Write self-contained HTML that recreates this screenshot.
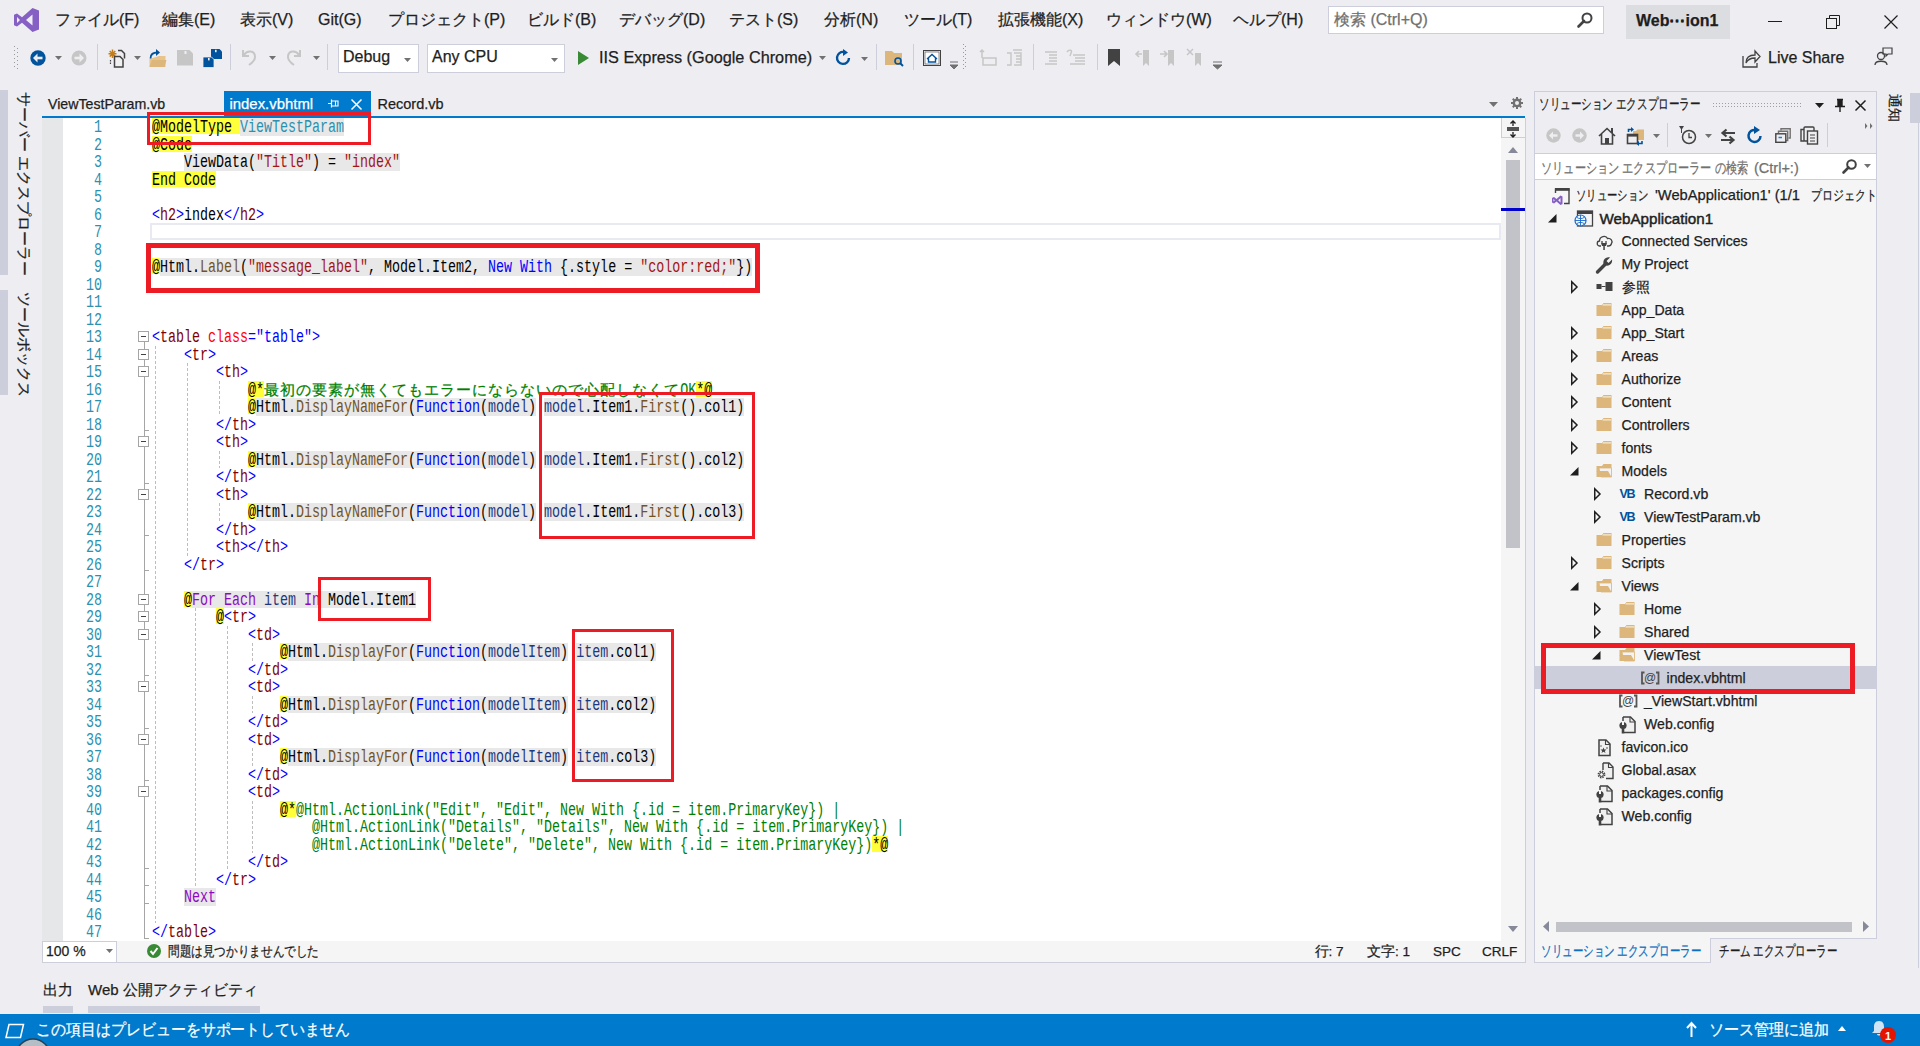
<!DOCTYPE html>
<html><head><meta charset='utf-8'><style>
*{margin:0;padding:0;box-sizing:border-box}
html,body{width:1920px;height:1046px;overflow:hidden;background:#EEEEF2;position:relative;font-family:"Liberation Sans",sans-serif;color:#1E1E1E}
.a{position:absolute}
.t{position:absolute;white-space:pre;line-height:16px;font-size:16px;-webkit-text-stroke:0.25px currentColor}
.sx{display:inline-block;transform-origin:0 0}
svg{position:absolute;overflow:visible}
</style></head><body>
<svg class='a' style='left:14px;top:8px;' width='26' height='24' viewBox='0 0 26 24'><path d='M18.5 0 L25 2.6 V21.4 L18.5 24 L8 14.8 L3 18.6 L0 17.2 V6.8 L3 5.4 L8 9.2 Z M18.5 6.6 L12 12 L18.5 17.4 Z M3 9 V15 L6 12 Z' fill='#865FC5' fill-rule='evenodd'/></svg>
<div class='t' style='left:55px;top:12px;font-size:16px;line-height:16px;color:#1E1E1E;'>ファイル(F)</div>
<div class='t' style='left:162px;top:12px;font-size:16px;line-height:16px;color:#1E1E1E;'>編集(E)</div>
<div class='t' style='left:240px;top:12px;font-size:16px;line-height:16px;color:#1E1E1E;'>表示(V)</div>
<div class='t' style='left:318px;top:12px;font-size:16px;line-height:16px;color:#1E1E1E;'>Git(G)</div>
<div class='t' style='left:388px;top:12px;font-size:16px;line-height:16px;color:#1E1E1E;'>プロジェクト(P)</div>
<div class='t' style='left:527px;top:12px;font-size:16px;line-height:16px;color:#1E1E1E;'>ビルド(B)</div>
<div class='t' style='left:619px;top:12px;font-size:16px;line-height:16px;color:#1E1E1E;'>デバッグ(D)</div>
<div class='t' style='left:729px;top:12px;font-size:16px;line-height:16px;color:#1E1E1E;'>テスト(S)</div>
<div class='t' style='left:824px;top:12px;font-size:16px;line-height:16px;color:#1E1E1E;'>分析(N)</div>
<div class='t' style='left:904px;top:12px;font-size:16px;line-height:16px;color:#1E1E1E;'>ツール(T)</div>
<div class='t' style='left:998px;top:12px;font-size:16px;line-height:16px;color:#1E1E1E;'>拡張機能(X)</div>
<div class='t' style='left:1106px;top:12px;font-size:16px;line-height:16px;color:#1E1E1E;'>ウィンドウ(W)</div>
<div class='t' style='left:1233px;top:12px;font-size:16px;line-height:16px;color:#1E1E1E;'>ヘルプ(H)</div>
<div class='a' style='left:1328px;top:6px;width:276px;height:28px;background:#fff;border:1px solid #CCCEDB'></div>
<div class='t' style='left:1334px;top:12px;font-size:16px;line-height:16px;color:#717171;'>検索 (Ctrl+Q)</div>
<svg class='a' style='left:1577px;top:12px;' width='16' height='16' viewBox='0 0 16 16'><circle cx='10' cy='6' r='4.5' fill='none' stroke='#424242' stroke-width='2'/><path d='M7 9 L1.5 14.5' stroke='#424242' stroke-width='2.6' stroke-linecap='round'/></svg>
<div class='a' style='left:1626px;top:5px;width:104px;height:34px;background:#DCDDE1'></div>
<div class='t' style='left:1636px;top:13px;font-size:16px;line-height:16px;color:#1E1E1E;font-weight:bold'>Web⋯ion1</div>
<div class='a' style='left:1768px;top:21px;width:14px;height:1px;background:#1E1E1E'></div>
<svg class='a' style='left:1826px;top:15px;' width='14' height='14' viewBox='0 0 14 14'><rect x='0.5' y='3.5' width='10' height='10' fill='none' stroke='#1E1E1E'/><path d='M3.5 3.5 V0.5 H13.5 V10.5 H10.5' fill='none' stroke='#1E1E1E'/></svg>
<svg class='a' style='left:1884px;top:15px;' width='14' height='14' viewBox='0 0 14 14'><path d='M0.5 0.5 L13.5 13.5 M13.5 0.5 L0.5 13.5' stroke='#1E1E1E' stroke-width='1.2'/></svg>
<svg class='a' style='left:14px;top:46px;' width='6' height='24' viewBox='0 0 6 24'><rect x='0' y='0' width='1' height='1' fill='#999'/><rect x='3' y='2' width='1' height='1' fill='#999'/><rect x='0' y='4' width='1' height='1' fill='#999'/><rect x='3' y='6' width='1' height='1' fill='#999'/><rect x='0' y='8' width='1' height='1' fill='#999'/><rect x='3' y='10' width='1' height='1' fill='#999'/><rect x='0' y='12' width='1' height='1' fill='#999'/><rect x='3' y='14' width='1' height='1' fill='#999'/><rect x='0' y='16' width='1' height='1' fill='#999'/><rect x='3' y='18' width='1' height='1' fill='#999'/><rect x='0' y='20' width='1' height='1' fill='#999'/><rect x='3' y='22' width='1' height='1' fill='#999'/></svg>
<svg class='a' style='left:30px;top:50px;' width='16' height='16' viewBox='0 0 16 16'><circle cx='8' cy='8' r='7.7' fill='#00539C'/><path d='M12.5 8 H5.5' stroke='#EEEEF2' stroke-width='2.6'/><path d='M3 8 L7.5 3.5 V12.5 Z' fill='#EEEEF2'/></svg>
<svg class='a' style='left:55px;top:56px;' width='7' height='4' viewBox='0 0 7 4'><path d='M0 0 H7 L3.5 4 Z' fill='#717171'/></svg>
<svg class='a' style='left:71px;top:50px;' width='16' height='16' viewBox='0 0 16 16'><circle cx='8' cy='8' r='7.5' fill='#C6C6C6'/><path d='M3.5 8 H10.5' stroke='#EEEEF2' stroke-width='2.6'/><path d='M13 8 L8.5 3.5 V12.5 Z' fill='#EEEEF2'/></svg>
<div class='a' style='left:97px;top:44px;width:1px;height:26px;background:#CCCEDB'></div>
<div class='a' style='left:230px;top:44px;width:1px;height:26px;background:#CCCEDB'></div>
<div class='a' style='left:327px;top:44px;width:1px;height:26px;background:#CCCEDB'></div>
<div class='a' style='left:876px;top:44px;width:1px;height:26px;background:#CCCEDB'></div>
<svg class='a' style='left:107px;top:48px;' width='19' height='20' viewBox='0 0 19 20'><path d='M5.5 1.5 V10 M1.5 5.8 H9.5 M2.7 3 L8.3 8.6 M8.3 3 L2.7 8.6' stroke='#C27D1A' stroke-width='1.5'/><path d='M11 2.5 H14.5 L17.5 5.5 V10.5' fill='none' stroke='#424242' stroke-width='1.5'/><path d='M7.5 8.5 H13 L16 11.5 V19 H7.5 Z' fill='#F0F0F0' stroke='#424242' stroke-width='1.5'/><path d='M3.5 12 V15.5 H5' fill='none' stroke='#424242' stroke-width='1.2' stroke-dasharray='1.5 1'/></svg>
<svg class='a' style='left:134px;top:56px;' width='7' height='4' viewBox='0 0 7 4'><path d='M0 0 H7 L3.5 4 Z' fill='#717171'/></svg>
<svg class='a' style='left:149px;top:49px;' width='18' height='19' viewBox='0 0 18 19'><path d='M10 7 H16.5 V18 H0.5 V10 Z' fill='#E8C48A'/><path d='M0.5 18 L3 11 H17.5 L15.5 18 Z' fill='#DCB67A'/><path d='M1.5 9.5 C1.5 5 4 3.5 8.5 3.5' fill='none' stroke='#00539C' stroke-width='1.8'/><path d='M7 0 L11 3.5 L7 7 Z' fill='#00539C'/></svg>
<svg class='a' style='left:177px;top:50px;' width='16' height='16' viewBox='0 0 16 16'><path d='M0 0 H12.5 L16 3.5 V15.5 H0 Z' fill='#C6C6C6'/><rect x='3' y='0' width='8' height='5.5' fill='#EEEEF2' opacity='0'/><rect x='7.5' y='1' width='2' height='3' fill='#EEEEF2'/></svg>
<svg class='a' style='left:203px;top:49px;' width='19' height='19' viewBox='0 0 19 19'><path d='M8 0 H16.5 L19 2.5 V10 H8 Z' fill='#00539C'/><rect x='12' y='0.8' width='1.6' height='2.4' fill='#EEEEF2'/><path d='M0 8 H8.5 L11 10.5 V18.5 H0 Z' fill='#00539C' stroke='#EEEEF2' stroke-width='0.8'/><rect x='5' y='9' width='1.6' height='2.4' fill='#EEEEF2'/></svg>
<svg class='a' style='left:241px;top:48px;' width='16' height='18' viewBox='0 0 16 18'><path d='M2 2 V8 H8' fill='none' stroke='#C6C6C6' stroke-width='2'/><path d='M3 7 C6 2 14 2 14 9 C14 13 11 15 8 17' fill='none' stroke='#C6C6C6' stroke-width='2'/></svg>
<svg class='a' style='left:269px;top:56px;' width='7' height='4' viewBox='0 0 7 4'><path d='M0 0 H7 L3.5 4 Z' fill='#717171'/></svg>
<svg class='a' style='left:286px;top:48px;' width='16' height='18' viewBox='0 0 16 18'><path d='M14 2 V8 H8' fill='none' stroke='#C6C6C6' stroke-width='2'/><path d='M13 7 C10 2 2 2 2 9 C2 13 5 15 8 17' fill='none' stroke='#C6C6C6' stroke-width='2'/></svg>
<svg class='a' style='left:313px;top:56px;' width='7' height='4' viewBox='0 0 7 4'><path d='M0 0 H7 L3.5 4 Z' fill='#717171'/></svg>
<div class='a' style='left:338px;top:44px;width:81px;height:29px;background:#fff;border:1px solid #CCCEDB'></div>
<div class='t' style='left:343px;top:49px;font-size:16px;line-height:16px;color:#1E1E1E;'>Debug</div>
<svg class='a' style='left:404px;top:58px;' width='7' height='4' viewBox='0 0 7 4'><path d='M0 0 H7 L3.5 4 Z' fill='#717171'/></svg>
<div class='a' style='left:427px;top:44px;width:138px;height:29px;background:#fff;border:1px solid #CCCEDB'></div>
<div class='t' style='left:432px;top:49px;font-size:16px;line-height:16px;color:#1E1E1E;'>Any CPU</div>
<svg class='a' style='left:551px;top:58px;' width='7' height='4' viewBox='0 0 7 4'><path d='M0 0 H7 L3.5 4 Z' fill='#717171'/></svg>
<svg class='a' style='left:578px;top:51px;' width='11' height='14' viewBox='0 0 11 14'><path d='M0 0 L11 7 L0 14 Z' fill='#388A34'/></svg>
<div class='t' style='left:599px;top:49px;font-size:16.25px;line-height:16.25px;color:#1E1E1E;'>IIS Express (Google Chrome)</div>
<svg class='a' style='left:819px;top:56px;' width='7' height='4' viewBox='0 0 7 4'><path d='M0 0 H7 L3.5 4 Z' fill='#717171'/></svg>
<svg class='a' style='left:836px;top:49px;' width='16' height='18' viewBox='0 0 16 18'><path d='M13 9 A6 6 0 1 1 8 3' fill='none' stroke='#00539C' stroke-width='2.4'/><path d='M7 0 L12 3.5 L7 7 Z' fill='#00539C'/></svg>
<svg class='a' style='left:861px;top:57px;' width='7' height='4' viewBox='0 0 7 4'><path d='M0 0 H7 L3.5 4 Z' fill='#717171'/></svg>
<svg class='a' style='left:885px;top:50px;' width='19' height='18' viewBox='0 0 19 18'><path d='M0 1 H7 L9 3 H17 V15 H0 Z' fill='#DCB67A'/><circle cx='13' cy='11' r='3' fill='none' stroke='#00539C' stroke-width='1.6'/><path d='M15 13 L18 16' stroke='#00539C' stroke-width='2'/></svg>
<div class='a' style='left:913px;top:44px;width:1px;height:26px;background:#CCCEDB'></div>
<svg class='a' style='left:923px;top:50px;' width='18' height='16' viewBox='0 0 18 16'><rect x='0.5' y='0.5' width='17' height='15' fill='none' stroke='#424242'/><rect x='2' y='2' width='14' height='12' fill='#fff' stroke='#424242' stroke-width='0.6'/><path d='M4 9 L9 4.5 L14 9 M5.5 8 V12 H12.5 V8' fill='none' stroke='#00539C' stroke-width='1.4'/></svg>
<svg class='a' style='left:950px;top:62px;' width='8' height='8' viewBox='0 0 8 8'><path d='M0 0 H8 M0 3 H8 L4 7 Z' stroke='#717171' fill='#717171' stroke-width='1'/></svg>
<svg class='a' style='left:963px;top:44px;' width='3' height='26' viewBox='0 0 3 26'><rect x='0' y='0' width='1' height='1' fill='#999'/><rect x='2' y='2' width='1' height='1' fill='#999'/><rect x='0' y='4' width='1' height='1' fill='#999'/><rect x='2' y='6' width='1' height='1' fill='#999'/><rect x='0' y='8' width='1' height='1' fill='#999'/><rect x='2' y='10' width='1' height='1' fill='#999'/><rect x='0' y='12' width='1' height='1' fill='#999'/><rect x='2' y='14' width='1' height='1' fill='#999'/><rect x='0' y='16' width='1' height='1' fill='#999'/><rect x='2' y='18' width='1' height='1' fill='#999'/><rect x='0' y='20' width='1' height='1' fill='#999'/><rect x='2' y='22' width='1' height='1' fill='#999'/><rect x='0' y='24' width='1' height='1' fill='#999'/></svg>
<svg class='a' style='left:980px;top:50px;' width='16' height='16' viewBox='0 0 16 16'><path d='M2 0 V8 M0 2 L2 0 L4 2 M3 8 H16 V15 H3 Z' fill='none' stroke='#C6C6C6' stroke-width='1.5'/></svg>
<svg class='a' style='left:1006px;top:49px;' width='16' height='18' viewBox='0 0 16 18'><path d='M1 4 H5 V16 H1 M7 1 H16 M8 4 H15 V16 H8 M10 7 H15 M10 10 H15 M10 13 H15' fill='none' stroke='#C6C6C6' stroke-width='1.4'/></svg>
<div class='a' style='left:1033px;top:44px;width:1px;height:26px;background:#CCCEDB'></div>
<svg class='a' style='left:1044px;top:51px;' width='14' height='14' viewBox='0 0 14 14'><path d='M1 1 H13 M5 4 H13 M5 7 H13 M5 10 H13 M1 13 H13' stroke='#C6C6C6' stroke-width='1.4'/></svg>
<svg class='a' style='left:1067px;top:50px;' width='18' height='16' viewBox='0 0 18 16'><path d='M0 2 C2 -1 6 0 4 3 L3 6 M6 5 H18 M8 8 H18 M8 11 H18 M3 14 H18' fill='none' stroke='#C6C6C6' stroke-width='1.4'/></svg>
<div class='a' style='left:1097px;top:44px;width:1px;height:26px;background:#CCCEDB'></div>
<svg class='a' style='left:1108px;top:49px;' width='12' height='17' viewBox='0 0 12 17'><path d='M0 0 H12 V17 L6 12 L0 17 Z' fill='#424242'/></svg>
<svg class='a' style='left:1135px;top:49px;' width='16' height='17' viewBox='0 0 16 17'><path d='M8 1 H14 V17 L11 14 L8 17 Z' fill='#C6C6C6'/><path d='M7 5 H1 M4 2 L1 5 L4 8' fill='none' stroke='#C6C6C6' stroke-width='1.6'/></svg>
<svg class='a' style='left:1160px;top:49px;' width='16' height='17' viewBox='0 0 16 17'><path d='M8 1 H14 V17 L11 14 L8 17 Z' fill='#C6C6C6'/><path d='M0 5 H7 M4 2 L7 5 L4 8' fill='none' stroke='#C6C6C6' stroke-width='1.6'/></svg>
<svg class='a' style='left:1187px;top:49px;' width='16' height='17' viewBox='0 0 16 17'><path d='M8 4 H14 V17 L11 14 L8 17 Z' fill='#C6C6C6'/><path d='M0 0 L6 6 M6 0 L0 6' fill='none' stroke='#C6C6C6' stroke-width='1.5'/></svg>
<svg class='a' style='left:1213px;top:62px;' width='9' height='8' viewBox='0 0 9 8'><path d='M0 0 H9 M0 3 H9 L4.5 7 Z' stroke='#717171' fill='#717171' stroke-width='1'/></svg>
<svg class='a' style='left:1742px;top:48px;' width='19' height='20' viewBox='0 0 19 20'><path d='M1 8 V19 H15 V15' fill='none' stroke='#424242' stroke-width='1.3'/><path d='M4 15 C4 9 8 7 13 7 V3 L18 8.5 L13 14 V10 C9 10 6 11 4 15 Z' fill='none' stroke='#424242' stroke-width='1.3'/></svg>
<div class='t' style='left:1768px;top:50px;font-size:16px;line-height:16px;color:#1E1E1E;'>Live Share</div>
<svg class='a' style='left:1874px;top:47px;' width='19' height='19' viewBox='0 0 19 19'><circle cx='7' cy='9' r='3.5' fill='none' stroke='#424242' stroke-width='1.3'/><path d='M1 18 C1 13 13 13 13 18' fill='none' stroke='#424242' stroke-width='1.3'/><path d='M9 1 H18 V7 H14 L12 9 V7 H9 Z' fill='none' stroke='#424242' stroke-width='1.2'/></svg>
<div class='a' style='left:0px;top:90px;width:8px;height:185px;background:#CCCEDB'></div>
<div class='a' style='left:0px;top:290px;width:8px;height:105px;background:#CCCEDB'></div>
<div class='t' style='left:16px;top:92px;font-size:15px;line-height:15px;color:#1E1E1E;writing-mode:vertical-rl;text-orientation:sideways;line-height:16px'>サーバー エクスプローラー</div>
<div class='t' style='left:16px;top:292px;font-size:15px;line-height:15px;color:#1E1E1E;writing-mode:vertical-rl;text-orientation:sideways;line-height:16px'>ツールボックス</div>
<div class='a' style='left:1910px;top:93px;width:10px;height:30px;background:#CCCEDB'></div>
<div class='t' style='left:1887px;top:94px;font-size:14px;line-height:14px;color:#1E1E1E;writing-mode:vertical-rl;text-orientation:sideways;line-height:16px'>通知</div>
<div class='a' style='left:1918px;top:93px;width:1px;height:875px;background:#CCCEDB'></div>
<div class='t' style='left:43px;top:982px;font-size:15px;line-height:15px;color:#1E1E1E;'>出力</div>
<div class='t' style='left:88px;top:982px;font-size:15px;line-height:15px;color:#1E1E1E;'>Web 公開アクティビティ</div>
<div class='a' style='left:43px;top:1006px;width:30px;height:7px;background:#CCCEDB'></div>
<div class='a' style='left:88px;top:1006px;width:172px;height:7px;background:#CCCEDB'></div>
<div class='a' style='left:0px;top:1014px;width:1920px;height:32px;background:#007ACC'></div>
<svg class='a' style='left:5px;top:1022.5px;' width='20' height='16' viewBox='0 0 20 16'><path d='M4 1.5 H18.5 L15.5 14.5 H1 Z' fill='none' stroke='#fff' stroke-width='1.5'/></svg>
<div class='t' style='left:36px;top:1022px;font-size:16px;line-height:16px;color:#fff;'><span class='sx' style='transform:scaleX(0.935)'>この項目はプレビューをサポートしていません</span></div>
<svg class='a' style='left:1686px;top:1022px;' width='11' height='15' viewBox='0 0 11 15'><path d='M5.5 15 V2 M1 6 L5.5 1 L10 6' fill='none' stroke='#fff' stroke-width='2'/></svg>
<div class='t' style='left:1709px;top:1022px;font-size:16px;line-height:16px;color:#fff;'><span class='sx' style='transform:scaleX(0.94)'>ソース管理に追加</span></div>
<svg class='a' style='left:1838px;top:1026px;' width='8' height='5' viewBox='0 0 8 5'><path d='M0 5 L4 0 L8 5 Z' fill='#fff'/></svg>
<svg class='a' style='left:1871px;top:1020px;' width='16' height='17' viewBox='0 0 16 17'><path d='M8 1 C4 1 3 4 3 7 V11 L1 13 H15 L13 11 V7 C13 4 12 1 8 1 Z M6 14 C6 16 10 16 10 14' fill='#D0E4F5' /></svg>
<svg class='a' style='left:1880px;top:1027px;' width='16' height='16' viewBox='0 0 16 16'><circle cx='8' cy='8' r='8' fill='#E51400'/><text x='8' y='12.5' font-size='11' font-weight='bold' text-anchor='middle' fill='#fff' font-family='Liberation Sans'>1</text></svg>
<svg class='a' style='left:14px;top:1037px;' width='38' height='10' viewBox='0 0 38 10'><circle cx='19' cy='19' r='17' fill='#B4BEC4' stroke='#2A3F4F' stroke-width='1.5'/></svg>
<div class='t' style='left:48px;top:97.4px;font-size:14.2px;line-height:14.2px;color:#1E1E1E;'>ViewTestParam.vb</div>
<div class='a' style='left:224px;top:91px;width:147px;height:27px;background:#007ACC'></div>
<div class='t' style='left:229.5px;top:97.4px;font-size:14.9px;line-height:14.9px;color:#FFFFFF;'>index.vbhtml</div>
<svg class='a' style='left:328px;top:98px;' width='11' height='11' viewBox='0 0 11 11'><path d='M0 5.5 H3.5 M3.5 1.5 V9.5' fill='none' stroke='#fff' stroke-width='1.2'/><path d='M3.5 3 H10 V8 H3.5 M7.5 3 V8' fill='none' stroke='#fff' stroke-width='1.1'/></svg>
<svg class='a' style='left:351px;top:99px;' width='11' height='11' viewBox='0 0 11 11'><path d='M0.5 0.5 L10.5 10.5 M10.5 0.5 L0.5 10.5' stroke='#fff' stroke-width='1.5'/></svg>
<div class='t' style='left:377.5px;top:97.4px;font-size:14.5px;line-height:14.5px;color:#1E1E1E;'>Record.vb</div>
<svg class='a' style='left:1489px;top:102px;' width='9' height='5' viewBox='0 0 9 5'><path d='M0 0 H9 L4.5 5 Z' fill='#717171'/></svg>
<svg class='a' style='left:1511px;top:97px;' width='12' height='12' viewBox='0 0 12 12'><circle cx='6' cy='6' r='3.2' fill='none' stroke='#717171' stroke-width='2.4'/><rect x='5' y='0' width='2' height='3' fill='#717171' transform='rotate(0 6 6)'/><rect x='5' y='0' width='2' height='3' fill='#717171' transform='rotate(45 6 6)'/><rect x='5' y='0' width='2' height='3' fill='#717171' transform='rotate(90 6 6)'/><rect x='5' y='0' width='2' height='3' fill='#717171' transform='rotate(135 6 6)'/><rect x='5' y='0' width='2' height='3' fill='#717171' transform='rotate(180 6 6)'/><rect x='5' y='0' width='2' height='3' fill='#717171' transform='rotate(225 6 6)'/><rect x='5' y='0' width='2' height='3' fill='#717171' transform='rotate(270 6 6)'/><rect x='5' y='0' width='2' height='3' fill='#717171' transform='rotate(315 6 6)'/></svg>
<div class='a' style='left:42px;top:116px;width:1483px;height:2px;background:#007ACC'></div>
<div class='a' style='left:42px;top:118px;width:1459px;height:823px;background:#FFFFFF'></div>
<div class='a' style='left:42px;top:118px;width:21px;height:823px;background:#E6E7E8'></div>
<div class='a' style='left:0px;top:119.1px;width:145.34px;height:823px;transform:scaleX(0.7018);transform-origin:0 0;font-family:"Liberation Mono",monospace;font-size:19px;color:#2B91AF;white-space:pre'><div style='position:absolute;right:0;top:0.0px;height:17.5px;line-height:17.5px'>1</div><div style='position:absolute;right:0;top:17.5px;height:17.5px;line-height:17.5px'>2</div><div style='position:absolute;right:0;top:35.0px;height:17.5px;line-height:17.5px'>3</div><div style='position:absolute;right:0;top:52.5px;height:17.5px;line-height:17.5px'>4</div><div style='position:absolute;right:0;top:70.0px;height:17.5px;line-height:17.5px'>5</div><div style='position:absolute;right:0;top:87.5px;height:17.5px;line-height:17.5px'>6</div><div style='position:absolute;right:0;top:105.0px;height:17.5px;line-height:17.5px'>7</div><div style='position:absolute;right:0;top:122.5px;height:17.5px;line-height:17.5px'>8</div><div style='position:absolute;right:0;top:140.0px;height:17.5px;line-height:17.5px'>9</div><div style='position:absolute;right:0;top:157.5px;height:17.5px;line-height:17.5px'>10</div><div style='position:absolute;right:0;top:175.0px;height:17.5px;line-height:17.5px'>11</div><div style='position:absolute;right:0;top:192.5px;height:17.5px;line-height:17.5px'>12</div><div style='position:absolute;right:0;top:210.0px;height:17.5px;line-height:17.5px'>13</div><div style='position:absolute;right:0;top:227.5px;height:17.5px;line-height:17.5px'>14</div><div style='position:absolute;right:0;top:245.0px;height:17.5px;line-height:17.5px'>15</div><div style='position:absolute;right:0;top:262.5px;height:17.5px;line-height:17.5px'>16</div><div style='position:absolute;right:0;top:280.0px;height:17.5px;line-height:17.5px'>17</div><div style='position:absolute;right:0;top:297.5px;height:17.5px;line-height:17.5px'>18</div><div style='position:absolute;right:0;top:315.0px;height:17.5px;line-height:17.5px'>19</div><div style='position:absolute;right:0;top:332.5px;height:17.5px;line-height:17.5px'>20</div><div style='position:absolute;right:0;top:350.0px;height:17.5px;line-height:17.5px'>21</div><div style='position:absolute;right:0;top:367.5px;height:17.5px;line-height:17.5px'>22</div><div style='position:absolute;right:0;top:385.0px;height:17.5px;line-height:17.5px'>23</div><div style='position:absolute;right:0;top:402.5px;height:17.5px;line-height:17.5px'>24</div><div style='position:absolute;right:0;top:420.0px;height:17.5px;line-height:17.5px'>25</div><div style='position:absolute;right:0;top:437.5px;height:17.5px;line-height:17.5px'>26</div><div style='position:absolute;right:0;top:455.0px;height:17.5px;line-height:17.5px'>27</div><div style='position:absolute;right:0;top:472.5px;height:17.5px;line-height:17.5px'>28</div><div style='position:absolute;right:0;top:490.0px;height:17.5px;line-height:17.5px'>29</div><div style='position:absolute;right:0;top:507.5px;height:17.5px;line-height:17.5px'>30</div><div style='position:absolute;right:0;top:525.0px;height:17.5px;line-height:17.5px'>31</div><div style='position:absolute;right:0;top:542.5px;height:17.5px;line-height:17.5px'>32</div><div style='position:absolute;right:0;top:560.0px;height:17.5px;line-height:17.5px'>33</div><div style='position:absolute;right:0;top:577.5px;height:17.5px;line-height:17.5px'>34</div><div style='position:absolute;right:0;top:595.0px;height:17.5px;line-height:17.5px'>35</div><div style='position:absolute;right:0;top:612.5px;height:17.5px;line-height:17.5px'>36</div><div style='position:absolute;right:0;top:630.0px;height:17.5px;line-height:17.5px'>37</div><div style='position:absolute;right:0;top:647.5px;height:17.5px;line-height:17.5px'>38</div><div style='position:absolute;right:0;top:665.0px;height:17.5px;line-height:17.5px'>39</div><div style='position:absolute;right:0;top:682.5px;height:17.5px;line-height:17.5px'>40</div><div style='position:absolute;right:0;top:700.0px;height:17.5px;line-height:17.5px'>41</div><div style='position:absolute;right:0;top:717.5px;height:17.5px;line-height:17.5px'>42</div><div style='position:absolute;right:0;top:735.0px;height:17.5px;line-height:17.5px'>43</div><div style='position:absolute;right:0;top:752.5px;height:17.5px;line-height:17.5px'>44</div><div style='position:absolute;right:0;top:770.0px;height:17.5px;line-height:17.5px'>45</div><div style='position:absolute;right:0;top:787.5px;height:17.5px;line-height:17.5px'>46</div><div style='position:absolute;right:0;top:805.0px;height:17.5px;line-height:17.5px'>47</div></div>
<div class='a' style='left:150px;top:223.3px;width:1351px;height:17px;border:2px solid #E9E9F1'></div>
<div class='a' style='left:155px;top:345.5px;width:1px;height:577.5px;background:repeating-linear-gradient(to bottom,#BDBDBD 0 3px,transparent 3px 5px)'></div>
<div class='a' style='left:187px;top:363.0px;width:1px;height:192.5px;background:repeating-linear-gradient(to bottom,#BDBDBD 0 3px,transparent 3px 5px)'></div>
<div class='a' style='left:219px;top:380.5px;width:1px;height:35.0px;background:repeating-linear-gradient(to bottom,#BDBDBD 0 3px,transparent 3px 5px)'></div>
<div class='a' style='left:219px;top:450.5px;width:1px;height:17.5px;background:repeating-linear-gradient(to bottom,#BDBDBD 0 3px,transparent 3px 5px)'></div>
<div class='a' style='left:219px;top:503.0px;width:1px;height:17.5px;background:repeating-linear-gradient(to bottom,#BDBDBD 0 3px,transparent 3px 5px)'></div>
<div class='a' style='left:195px;top:608.0px;width:1px;height:280.0px;background:repeating-linear-gradient(to bottom,#BDBDBD 0 3px,transparent 3px 5px)'></div>
<div class='a' style='left:226.5px;top:625.5px;width:1px;height:245.0px;background:repeating-linear-gradient(to bottom,#BDBDBD 0 3px,transparent 3px 5px)'></div>
<div class='a' style='left:251.5px;top:643.0px;width:1px;height:17.5px;background:repeating-linear-gradient(to bottom,#BDBDBD 0 3px,transparent 3px 5px)'></div>
<div class='a' style='left:251.5px;top:695.5px;width:1px;height:17.5px;background:repeating-linear-gradient(to bottom,#BDBDBD 0 3px,transparent 3px 5px)'></div>
<div class='a' style='left:251.5px;top:748.0px;width:1px;height:17.5px;background:repeating-linear-gradient(to bottom,#BDBDBD 0 3px,transparent 3px 5px)'></div>
<div class='a' style='left:251.5px;top:800.5px;width:1px;height:52.5px;background:repeating-linear-gradient(to bottom,#BDBDBD 0 3px,transparent 3px 5px)'></div>
<div class='a' style='left:143.5px;top:336.0px;width:1px;height:602.5px;background:#A5A5A5'></div>
<div class='a' style='left:144px;top:430.0px;width:5px;height:1px;background:#A5A5A5'></div>
<div class='a' style='left:144px;top:482.5px;width:5px;height:1px;background:#A5A5A5'></div>
<div class='a' style='left:144px;top:535.0px;width:5px;height:1px;background:#A5A5A5'></div>
<div class='a' style='left:144px;top:570.0px;width:5px;height:1px;background:#A5A5A5'></div>
<div class='a' style='left:144px;top:675.0px;width:5px;height:1px;background:#A5A5A5'></div>
<div class='a' style='left:144px;top:727.5px;width:5px;height:1px;background:#A5A5A5'></div>
<div class='a' style='left:144px;top:780.0px;width:5px;height:1px;background:#A5A5A5'></div>
<div class='a' style='left:144px;top:867.5px;width:5px;height:1px;background:#A5A5A5'></div>
<div class='a' style='left:144px;top:885.0px;width:5px;height:1px;background:#A5A5A5'></div>
<div class='a' style='left:144px;top:902.5px;width:5px;height:1px;background:#A5A5A5'></div>
<div class='a' style='left:144px;top:937.5px;width:5px;height:1px;background:#A5A5A5'></div>
<div class='a' style='left:138px;top:331.0px;width:11px;height:11px;background:#fff;border:1px solid #A5A5A5'></div>
<div class='a' style='left:141px;top:336.0px;width:5px;height:1px;background:#424242'></div>
<div class='a' style='left:138px;top:348.5px;width:11px;height:11px;background:#fff;border:1px solid #A5A5A5'></div>
<div class='a' style='left:141px;top:353.5px;width:5px;height:1px;background:#424242'></div>
<div class='a' style='left:138px;top:366.0px;width:11px;height:11px;background:#fff;border:1px solid #A5A5A5'></div>
<div class='a' style='left:141px;top:371.0px;width:5px;height:1px;background:#424242'></div>
<div class='a' style='left:138px;top:436.0px;width:11px;height:11px;background:#fff;border:1px solid #A5A5A5'></div>
<div class='a' style='left:141px;top:441.0px;width:5px;height:1px;background:#424242'></div>
<div class='a' style='left:138px;top:488.5px;width:11px;height:11px;background:#fff;border:1px solid #A5A5A5'></div>
<div class='a' style='left:141px;top:493.5px;width:5px;height:1px;background:#424242'></div>
<div class='a' style='left:138px;top:593.5px;width:11px;height:11px;background:#fff;border:1px solid #A5A5A5'></div>
<div class='a' style='left:141px;top:598.5px;width:5px;height:1px;background:#424242'></div>
<div class='a' style='left:138px;top:611.0px;width:11px;height:11px;background:#fff;border:1px solid #A5A5A5'></div>
<div class='a' style='left:141px;top:616.0px;width:5px;height:1px;background:#424242'></div>
<div class='a' style='left:138px;top:628.5px;width:11px;height:11px;background:#fff;border:1px solid #A5A5A5'></div>
<div class='a' style='left:141px;top:633.5px;width:5px;height:1px;background:#424242'></div>
<div class='a' style='left:138px;top:681.0px;width:11px;height:11px;background:#fff;border:1px solid #A5A5A5'></div>
<div class='a' style='left:141px;top:686.0px;width:5px;height:1px;background:#424242'></div>
<div class='a' style='left:138px;top:733.5px;width:11px;height:11px;background:#fff;border:1px solid #A5A5A5'></div>
<div class='a' style='left:141px;top:738.5px;width:5px;height:1px;background:#424242'></div>
<div class='a' style='left:138px;top:786.0px;width:11px;height:11px;background:#fff;border:1px solid #A5A5A5'></div>
<div class='a' style='left:141px;top:791.0px;width:5px;height:1px;background:#424242'></div>
<div class='a' style='left:151.5px;top:118.3px;width:88.0px;height:16px;background:#FFFF3A'></div>
<div class='a' style='left:239.5px;top:118.0px;width:104.0px;height:17.5px;background:#E8E8E8'></div>
<div class='a' style='left:151.5px;top:135.8px;width:40.0px;height:16px;background:#FFFF3A'></div>
<div class='a' style='left:183.5px;top:153.0px;width:216.0px;height:17.5px;background:#E8E8E8'></div>
<div class='a' style='left:151.5px;top:170.8px;width:64.0px;height:16px;background:#FFFF3A'></div>
<div class='a' style='left:151.5px;top:258.3px;width:8.0px;height:16px;background:#FFFF3A'></div>
<div class='a' style='left:159.5px;top:258.0px;width:592.0px;height:17.5px;background:#E8E8E8'></div>
<div class='a' style='left:247.5px;top:380.8px;width:16.0px;height:16px;background:#FFFF3A'></div>
<div class='a' style='left:695.5px;top:380.8px;width:16.0px;height:16px;background:#FFFF3A'></div>
<div class='a' style='left:183.5px;top:590.8px;width:8.0px;height:16px;background:#FFFF3A'></div>
<div class='a' style='left:191.5px;top:590.5px;width:224.0px;height:17.5px;background:#E8E8E8'></div>
<div class='a' style='left:215.5px;top:608.3px;width:8.0px;height:16px;background:#FFFF3A'></div>
<div class='a' style='left:279.5px;top:800.8px;width:16.0px;height:16px;background:#FFFF3A'></div>
<div class='a' style='left:871.5px;top:835.8px;width:16.0px;height:16px;background:#FFFF3A'></div>
<div class='a' style='left:183.5px;top:888.0px;width:32.0px;height:17.5px;background:#E8E8E8'></div>
<div class='a' style='left:247.5px;top:398.3px;width:8.0px;height:16px;background:#FFFF3A'></div>
<div class='a' style='left:255.5px;top:398.0px;width:280.0px;height:17.5px;background:#E8E8E8'></div>
<div class='a' style='left:543.5px;top:398.0px;width:200.0px;height:17.5px;background:#E8E8E8'></div>
<div class='a' style='left:247.5px;top:450.8px;width:8.0px;height:16px;background:#FFFF3A'></div>
<div class='a' style='left:255.5px;top:450.5px;width:280.0px;height:17.5px;background:#E8E8E8'></div>
<div class='a' style='left:543.5px;top:450.5px;width:200.0px;height:17.5px;background:#E8E8E8'></div>
<div class='a' style='left:247.5px;top:503.3px;width:8.0px;height:16px;background:#FFFF3A'></div>
<div class='a' style='left:255.5px;top:503.0px;width:280.0px;height:17.5px;background:#E8E8E8'></div>
<div class='a' style='left:543.5px;top:503.0px;width:200.0px;height:17.5px;background:#E8E8E8'></div>
<div class='a' style='left:279.5px;top:643.3px;width:8.0px;height:16px;background:#FFFF3A'></div>
<div class='a' style='left:287.5px;top:643.0px;width:280.0px;height:17.5px;background:#E8E8E8'></div>
<div class='a' style='left:575.5px;top:643.0px;width:80.0px;height:17.5px;background:#E8E8E8'></div>
<div class='a' style='left:279.5px;top:695.8px;width:8.0px;height:16px;background:#FFFF3A'></div>
<div class='a' style='left:287.5px;top:695.5px;width:280.0px;height:17.5px;background:#E8E8E8'></div>
<div class='a' style='left:575.5px;top:695.5px;width:80.0px;height:17.5px;background:#E8E8E8'></div>
<div class='a' style='left:279.5px;top:748.3px;width:8.0px;height:16px;background:#FFFF3A'></div>
<div class='a' style='left:287.5px;top:748.0px;width:280.0px;height:17.5px;background:#E8E8E8'></div>
<div class='a' style='left:575.5px;top:748.0px;width:80.0px;height:17.5px;background:#E8E8E8'></div>
<div class='a' style='left:151.5px;top:119.1px;width:1600px;height:823px;transform:scaleX(0.7018);transform-origin:0 0;font-family:"Liberation Mono",monospace;font-size:19px;white-space:pre'><div style='position:absolute;left:0;top:0.0px;height:17.5px;line-height:17.5px'><span style='color:#000000'>@ModelType </span><span style='color:#2B91AF'>ViewTestParam</span></div><div style='position:absolute;left:0;top:17.5px;height:17.5px;line-height:17.5px'><span style='color:#000000'>@Code</span></div><div style='position:absolute;left:0;top:35.0px;height:17.5px;line-height:17.5px'><span style='color:#000000'>    ViewData(</span><span style='color:#A31515'>"Title"</span><span style='color:#000000'>) = </span><span style='color:#A31515'>"index"</span></div><div style='position:absolute;left:0;top:52.5px;height:17.5px;line-height:17.5px'><span style='color:#000000'>End Code</span></div><div style='position:absolute;left:0;top:87.5px;height:17.5px;line-height:17.5px'><span style='color:#0000FF'>&lt;</span><span style='color:#800000'>h2</span><span style='color:#0000FF'>&gt;</span><span style='color:#000000'>index</span><span style='color:#0000FF'>&lt;/</span><span style='color:#800000'>h2</span><span style='color:#0000FF'>&gt;</span></div><div style='position:absolute;left:0;top:140.0px;height:17.5px;line-height:17.5px'><span style='color:#000000'>@Html.</span><span style='color:#74531F'>Label</span><span style='color:#000000'>(</span><span style='color:#A31515'>"message_label"</span><span style='color:#000000'>, Model.Item2, </span><span style='color:#0000FF'>New With</span><span style='color:#000000'> {.style = </span><span style='color:#A31515'>"color:red;"</span><span style='color:#000000'>})</span></div><div style='position:absolute;left:0;top:210.0px;height:17.5px;line-height:17.5px'><span style='color:#0000FF'>&lt;</span><span style='color:#800000'>table</span><span style='color:#000000'> </span><span style='color:#FF0000'>class</span><span style='color:#0000FF'>="table"&gt;</span></div><div style='position:absolute;left:0;top:227.5px;height:17.5px;line-height:17.5px'><span style='color:#000000'>    </span><span style='color:#0000FF'>&lt;</span><span style='color:#800000'>tr</span><span style='color:#0000FF'>&gt;</span></div><div style='position:absolute;left:0;top:245.0px;height:17.5px;line-height:17.5px'><span style='color:#000000'>        </span><span style='color:#0000FF'>&lt;</span><span style='color:#800000'>th</span><span style='color:#0000FF'>&gt;</span></div><div style='position:absolute;left:0;top:262.5px;height:17.5px;line-height:17.5px'><span style='color:#000000'>            @*</span><span style='color:#008000'>                                                    OK</span><span style='color:#000000'>*@</span></div><div style='position:absolute;left:0;top:297.5px;height:17.5px;line-height:17.5px'><span style='color:#000000'>        </span><span style='color:#0000FF'>&lt;/</span><span style='color:#800000'>th</span><span style='color:#0000FF'>&gt;</span></div><div style='position:absolute;left:0;top:315.0px;height:17.5px;line-height:17.5px'><span style='color:#000000'>        </span><span style='color:#0000FF'>&lt;</span><span style='color:#800000'>th</span><span style='color:#0000FF'>&gt;</span></div><div style='position:absolute;left:0;top:350.0px;height:17.5px;line-height:17.5px'><span style='color:#000000'>        </span><span style='color:#0000FF'>&lt;/</span><span style='color:#800000'>th</span><span style='color:#0000FF'>&gt;</span></div><div style='position:absolute;left:0;top:367.5px;height:17.5px;line-height:17.5px'><span style='color:#000000'>        </span><span style='color:#0000FF'>&lt;</span><span style='color:#800000'>th</span><span style='color:#0000FF'>&gt;</span></div><div style='position:absolute;left:0;top:402.5px;height:17.5px;line-height:17.5px'><span style='color:#000000'>        </span><span style='color:#0000FF'>&lt;/</span><span style='color:#800000'>th</span><span style='color:#0000FF'>&gt;</span></div><div style='position:absolute;left:0;top:420.0px;height:17.5px;line-height:17.5px'><span style='color:#000000'>        </span><span style='color:#0000FF'>&lt;</span><span style='color:#800000'>th</span><span style='color:#0000FF'>&gt;&lt;/</span><span style='color:#800000'>th</span><span style='color:#0000FF'>&gt;</span></div><div style='position:absolute;left:0;top:437.5px;height:17.5px;line-height:17.5px'><span style='color:#000000'>    </span><span style='color:#0000FF'>&lt;/</span><span style='color:#800000'>tr</span><span style='color:#0000FF'>&gt;</span></div><div style='position:absolute;left:0;top:472.5px;height:17.5px;line-height:17.5px'><span style='color:#000000'>    @</span><span style='color:#8F08C4'>For Each</span><span style='color:#000000'> </span><span style='color:#1F377F'>item</span><span style='color:#000000'> </span><span style='color:#8F08C4'>In</span><span style='color:#000000'> Model.Item1</span></div><div style='position:absolute;left:0;top:490.0px;height:17.5px;line-height:17.5px'><span style='color:#000000'>        @</span><span style='color:#0000FF'>&lt;</span><span style='color:#800000'>tr</span><span style='color:#0000FF'>&gt;</span></div><div style='position:absolute;left:0;top:507.5px;height:17.5px;line-height:17.5px'><span style='color:#000000'>            </span><span style='color:#0000FF'>&lt;</span><span style='color:#800000'>td</span><span style='color:#0000FF'>&gt;</span></div><div style='position:absolute;left:0;top:542.5px;height:17.5px;line-height:17.5px'><span style='color:#000000'>            </span><span style='color:#0000FF'>&lt;/</span><span style='color:#800000'>td</span><span style='color:#0000FF'>&gt;</span></div><div style='position:absolute;left:0;top:560.0px;height:17.5px;line-height:17.5px'><span style='color:#000000'>            </span><span style='color:#0000FF'>&lt;</span><span style='color:#800000'>td</span><span style='color:#0000FF'>&gt;</span></div><div style='position:absolute;left:0;top:595.0px;height:17.5px;line-height:17.5px'><span style='color:#000000'>            </span><span style='color:#0000FF'>&lt;/</span><span style='color:#800000'>td</span><span style='color:#0000FF'>&gt;</span></div><div style='position:absolute;left:0;top:612.5px;height:17.5px;line-height:17.5px'><span style='color:#000000'>            </span><span style='color:#0000FF'>&lt;</span><span style='color:#800000'>td</span><span style='color:#0000FF'>&gt;</span></div><div style='position:absolute;left:0;top:647.5px;height:17.5px;line-height:17.5px'><span style='color:#000000'>            </span><span style='color:#0000FF'>&lt;/</span><span style='color:#800000'>td</span><span style='color:#0000FF'>&gt;</span></div><div style='position:absolute;left:0;top:665.0px;height:17.5px;line-height:17.5px'><span style='color:#000000'>            </span><span style='color:#0000FF'>&lt;</span><span style='color:#800000'>td</span><span style='color:#0000FF'>&gt;</span></div><div style='position:absolute;left:0;top:682.5px;height:17.5px;line-height:17.5px'><span style='color:#000000'>                @*</span><span style='color:#008000'>@Html.ActionLink("Edit", "Edit", New With {.id = item.PrimaryKey}) |</span></div><div style='position:absolute;left:0;top:700.0px;height:17.5px;line-height:17.5px'><span style='color:#008000'>                    @Html.ActionLink("Details", "Details", New With {.id = item.PrimaryKey}) |</span></div><div style='position:absolute;left:0;top:717.5px;height:17.5px;line-height:17.5px'><span style='color:#008000'>                    @Html.ActionLink("Delete", "Delete", New With {.id = item.PrimaryKey})</span><span style='color:#000000'>*@</span></div><div style='position:absolute;left:0;top:735.0px;height:17.5px;line-height:17.5px'><span style='color:#000000'>            </span><span style='color:#0000FF'>&lt;/</span><span style='color:#800000'>td</span><span style='color:#0000FF'>&gt;</span></div><div style='position:absolute;left:0;top:752.5px;height:17.5px;line-height:17.5px'><span style='color:#000000'>        </span><span style='color:#0000FF'>&lt;/</span><span style='color:#800000'>tr</span><span style='color:#0000FF'>&gt;</span></div><div style='position:absolute;left:0;top:770.0px;height:17.5px;line-height:17.5px'><span style='color:#000000'>    </span><span style='color:#8F08C4'>Next</span></div><div style='position:absolute;left:0;top:805.0px;height:17.5px;line-height:17.5px'><span style='color:#0000FF'>&lt;/</span><span style='color:#800000'>table</span><span style='color:#0000FF'>&gt;</span></div><div style='position:absolute;left:0;top:280.0px;height:17.5px;line-height:17.5px'><span style='color:#000000'>            @Html.</span><span style='color:#74531F'>DisplayNameFor</span><span style='color:#000000'>(</span><span style='color:#0000FF'>Function</span><span style='color:#000000'>(</span><span style='color:#1F377F'>model</span><span style='color:#000000'>) </span><span style='color:#1F377F'>model</span><span style='color:#000000'>.Item1.</span><span style='color:#74531F'>First</span><span style='color:#000000'>().col1)</span></div><div style='position:absolute;left:0;top:332.5px;height:17.5px;line-height:17.5px'><span style='color:#000000'>            @Html.</span><span style='color:#74531F'>DisplayNameFor</span><span style='color:#000000'>(</span><span style='color:#0000FF'>Function</span><span style='color:#000000'>(</span><span style='color:#1F377F'>model</span><span style='color:#000000'>) </span><span style='color:#1F377F'>model</span><span style='color:#000000'>.Item1.</span><span style='color:#74531F'>First</span><span style='color:#000000'>().col2)</span></div><div style='position:absolute;left:0;top:385.0px;height:17.5px;line-height:17.5px'><span style='color:#000000'>            @Html.</span><span style='color:#74531F'>DisplayNameFor</span><span style='color:#000000'>(</span><span style='color:#0000FF'>Function</span><span style='color:#000000'>(</span><span style='color:#1F377F'>model</span><span style='color:#000000'>) </span><span style='color:#1F377F'>model</span><span style='color:#000000'>.Item1.</span><span style='color:#74531F'>First</span><span style='color:#000000'>().col3)</span></div><div style='position:absolute;left:0;top:525.0px;height:17.5px;line-height:17.5px'><span style='color:#000000'>                @Html.</span><span style='color:#74531F'>DisplayFor</span><span style='color:#000000'>(</span><span style='color:#0000FF'>Function</span><span style='color:#000000'>(</span><span style='color:#1F377F'>modelItem</span><span style='color:#000000'>) </span><span style='color:#1F377F'>item</span><span style='color:#000000'>.col1)</span></div><div style='position:absolute;left:0;top:577.5px;height:17.5px;line-height:17.5px'><span style='color:#000000'>                @Html.</span><span style='color:#74531F'>DisplayFor</span><span style='color:#000000'>(</span><span style='color:#0000FF'>Function</span><span style='color:#000000'>(</span><span style='color:#1F377F'>modelItem</span><span style='color:#000000'>) </span><span style='color:#1F377F'>item</span><span style='color:#000000'>.col2)</span></div><div style='position:absolute;left:0;top:630.0px;height:17.5px;line-height:17.5px'><span style='color:#000000'>                @Html.</span><span style='color:#74531F'>DisplayFor</span><span style='color:#000000'>(</span><span style='color:#0000FF'>Function</span><span style='color:#000000'>(</span><span style='color:#1F377F'>modelItem</span><span style='color:#000000'>) </span><span style='color:#1F377F'>item</span><span style='color:#000000'>.col3)</span></div></div>
<div class='t' style='left:263.5px;top:382.8px;font-size:14.5px;line-height:14.5px;color:#008000;'><span style='display:inline-block;width:16px'>最</span><span style='display:inline-block;width:16px'>初</span><span style='display:inline-block;width:16px'>の</span><span style='display:inline-block;width:16px'>要</span><span style='display:inline-block;width:16px'>素</span><span style='display:inline-block;width:16px'>が</span><span style='display:inline-block;width:16px'>無</span><span style='display:inline-block;width:16px'>く</span><span style='display:inline-block;width:16px'>て</span><span style='display:inline-block;width:16px'>も</span><span style='display:inline-block;width:16px'>エ</span><span style='display:inline-block;width:16px'>ラ</span><span style='display:inline-block;width:16px'>ー</span><span style='display:inline-block;width:16px'>に</span><span style='display:inline-block;width:16px'>な</span><span style='display:inline-block;width:16px'>ら</span><span style='display:inline-block;width:16px'>な</span><span style='display:inline-block;width:16px'>い</span><span style='display:inline-block;width:16px'>の</span><span style='display:inline-block;width:16px'>で</span><span style='display:inline-block;width:16px'>心</span><span style='display:inline-block;width:16px'>配</span><span style='display:inline-block;width:16px'>し</span><span style='display:inline-block;width:16px'>な</span><span style='display:inline-block;width:16px'>く</span><span style='display:inline-block;width:16px'>て</span></div>
<div class='a' style='left:147px;top:112px;width:224px;height:33px;border:3px solid #ED1C24'></div>
<div class='a' style='left:146px;top:243px;width:614px;height:50px;border:5px solid #ED1C24'></div>
<div class='a' style='left:539px;top:392px;width:216px;height:147px;border:3px solid #ED1C24'></div>
<div class='a' style='left:318px;top:577px;width:113px;height:44px;border:3px solid #ED1C24'></div>
<div class='a' style='left:572px;top:629px;width:102px;height:153px;border:3px solid #ED1C24'></div>
<div class='a' style='left:1501px;top:118px;width:24px;height:823px;background:#F5F5F5'></div>
<div class='a' style='left:1525px;top:118px;width:1px;height:823px;background:#CCCEDB'></div>
<div class='a' style='left:1501px;top:118px;width:24px;height:20px;background:#F5F5F5;border-bottom:1px solid #CCCEDB;border-left:1px solid #CCCEDB'></div>
<svg class='a' style='left:1506px;top:121px;' width='14' height='14' viewBox='0 0 14 14'><path d='M1 7 H13 M1 9 H13' stroke='#1E1E1E' stroke-width='1.3'/><path d='M7 0 V5 M4.5 2.5 L7 0 L9.5 2.5 M7 16 V11 M4.5 13.5 L7 16 L9.5 13.5' fill='none' stroke='#1E1E1E' stroke-width='1.3'/></svg>
<svg class='a' style='left:1508px;top:147px;' width='10' height='6' viewBox='0 0 10 6'><path d='M0 6 L5 0 L10 6 Z' fill='#868999'/></svg>
<div class='a' style='left:1506px;top:160px;width:14px;height:388px;background:#C2C3C9'></div>
<div class='a' style='left:1501px;top:208px;width:24px;height:2.6px;background:#0000CD'></div>
<svg class='a' style='left:1508px;top:926px;' width='10' height='6' viewBox='0 0 10 6'><path d='M0 0 L5 6 L10 0 Z' fill='#868999'/></svg>
<div class='a' style='left:42px;top:941px;width:1484px;height:22px;background:#F5F5F5;border-bottom:1px solid #CCCEDB;border-right:1px solid #CCCEDB'></div>
<div class='a' style='left:42px;top:941px;width:75px;height:22px;background:#fff;border:1px solid #CCCEDB'></div>
<div class='t' style='left:46px;top:944px;font-size:14px;line-height:14px;color:#1E1E1E;'>100 %</div>
<svg class='a' style='left:106px;top:949px;' width='7' height='4' viewBox='0 0 7 4'><path d='M0 0 H7 L3.5 4 Z' fill='#717171'/></svg>
<svg class='a' style='left:147px;top:944px;' width='14' height='14' viewBox='0 0 14 14'><circle cx='7' cy='7' r='7' fill='#388A34'/><path d='M3.5 7 L6 10 L10.5 4' fill='none' stroke='#fff' stroke-width='2'/></svg>
<div class='t' style='left:167.5px;top:944px;font-size:14px;line-height:14px;color:#1E1E1E;'><span class='sx' style='transform:scaleX(0.83)'>問題は見つかりませんでした</span></div>
<div class='t' style='left:1314.5px;top:945px;font-size:13.5px;line-height:13.5px;color:#1E1E1E;'>行: 7</div>
<div class='t' style='left:1367px;top:945px;font-size:13.5px;line-height:13.5px;color:#1E1E1E;'>文字: 1</div>
<div class='t' style='left:1433px;top:945px;font-size:13.5px;line-height:13.5px;color:#1E1E1E;'>SPC</div>
<div class='t' style='left:1482px;top:945px;font-size:13.5px;line-height:13.5px;color:#1E1E1E;'>CRLF</div>
<div class='a' style='left:1534px;top:91px;width:343px;height:848px;border:1px solid #CCCEDB;background:#EEEEF2'></div>
<div class='t' style='left:1539px;top:97px;font-size:14.5px;line-height:14.5px;color:#1E1E1E;'><span class='sx' style='transform:scaleX(0.705)'>ソリューション エクスプローラー</span></div>
<div class='a' style='left:1712px;top:102px;width:91px;height:6px;background-image:radial-gradient(#A0A0A0 0.6px,transparent 0.8px);background-size:3px 3px'></div>
<svg class='a' style='left:1815px;top:103px;' width='9' height='5' viewBox='0 0 9 5'><path d='M0 0 H9 L4.5 5 Z' fill='#1E1E1E'/></svg>
<svg class='a' style='left:1835px;top:99px;' width='10' height='13' viewBox='0 0 10 13'><path d='M2 0.5 H8 M3 0.5 V7 M7 0.5 V7 M0 7.5 H10 M5 7.5 V13' stroke='#1E1E1E' stroke-width='1.4' fill='none'/><rect x='3' y='1' width='4' height='6' fill='#1E1E1E'/></svg>
<svg class='a' style='left:1855px;top:100px;' width='11' height='11' viewBox='0 0 11 11'><path d='M0.5 0.5 L10.5 10.5 M10.5 0.5 L0.5 10.5' stroke='#1E1E1E' stroke-width='1.5'/></svg>
<svg class='a' style='left:1546px;top:128px;' width='15' height='15' viewBox='0 0 15 15'><circle cx='7.5' cy='7.5' r='7.2' fill='#C6C6C6'/><path d='M11.5 7.5 H5' stroke='#EEEEF2' stroke-width='2.4'/><path d='M3 7.5 L7 3.5 V11.5 Z' fill='#EEEEF2'/></svg>
<svg class='a' style='left:1572px;top:128px;' width='15' height='15' viewBox='0 0 15 15'><circle cx='7.5' cy='7.5' r='7.2' fill='#C6C6C6'/><path d='M3.5 7.5 H10' stroke='#EEEEF2' stroke-width='2.4'/><path d='M12 7.5 L8 3.5 V11.5 Z' fill='#EEEEF2'/></svg>
<svg class='a' style='left:1598px;top:127px;' width='18' height='18' viewBox='0 0 18 18'><path d='M1 9 L9 1.5 L17 9 M3.5 7 V17 H14.5 V7' fill='none' stroke='#424242' stroke-width='1.6'/><rect x='7' y='11' width='4' height='6' fill='#424242'/><rect x='13' y='1' width='2' height='5' fill='#424242'/></svg>
<svg class='a' style='left:1626px;top:126px;' width='18' height='19' viewBox='0 0 18 19'><path d='M7 5 H10 L11.5 3.5 H18 V14 H7 Z' fill='#DCB67A'/><rect x='1.5' y='8.5' width='10' height='9' fill='#EEEEF2' stroke='#424242' stroke-width='1.6'/><rect x='1' y='8' width='11' height='2.6' fill='#424242'/><path d='M2.5 6 V3.5 H6' fill='none' stroke='#00539C' stroke-width='1.6'/><path d='M5 1 L8 3.5 L5 6 Z' fill='#00539C'/><path d='M16 15 V17.5 H12' fill='none' stroke='#00539C' stroke-width='1.6'/><path d='M13 15 L10 17.5 L13 20 Z' fill='#00539C'/></svg>
<svg class='a' style='left:1653px;top:134px;' width='7' height='4' viewBox='0 0 7 4'><path d='M0 0 H7 L3.5 4 Z' fill='#717171'/></svg>
<div class='a' style='left:1667px;top:123px;width:1px;height:24px;background:#CCCEDB'></div>
<svg class='a' style='left:1679px;top:126px;' width='18' height='19' viewBox='0 0 18 19'><path d='M0 0 H5 L2.5 4 Z' fill='#424242'/><path d='M2.5 3 V7' stroke='#424242' stroke-width='1'/><circle cx='10' cy='11' r='6.5' fill='none' stroke='#424242' stroke-width='1.5'/><path d='M10 7 V11.5 H13' fill='none' stroke='#424242' stroke-width='1.3'/></svg>
<svg class='a' style='left:1705px;top:134px;' width='7' height='4' viewBox='0 0 7 4'><path d='M0 0 H7 L3.5 4 Z' fill='#717171'/></svg>
<svg class='a' style='left:1720px;top:128px;' width='16' height='17' viewBox='0 0 16 17'><path d='M15 5 H3 M6.5 1.5 L2.5 5 L6.5 8.5 M1 12 H13 M9.5 8.5 L13.5 12 L9.5 15.5' fill='none' stroke='#424242' stroke-width='2.2'/></svg>
<svg class='a' style='left:1747px;top:126px;' width='16' height='18' viewBox='0 0 16 18'><path d='M13.5 10 A6 6 0 1 1 8.5 4' fill='none' stroke='#00539C' stroke-width='2.5'/><path d='M7 0 L13 4 L7 8 Z' fill='#00539C'/></svg>
<svg class='a' style='left:1775px;top:128px;' width='16' height='15' viewBox='0 0 16 15'><path d='M6 2.5 V0.8 H15.2 V10 H13.5' fill='none' stroke='#717171' stroke-width='1.4'/><path d='M3.5 5 V3.3 H12.7 V12.5 H11' fill='none' stroke='#717171' stroke-width='1.4'/><rect x='0.8' y='5.8' width='10' height='8.5' fill='#EEEEF2' stroke='#424242' stroke-width='1.4'/><path d='M3.5 9.5 H7' stroke='#1B80D0' stroke-width='1.5'/></svg>
<svg class='a' style='left:1800px;top:126px;' width='18' height='19' viewBox='0 0 18 19'><path d='M4 3.5 H1 V15 H4' fill='none' stroke='#424242' stroke-width='1.4'/><rect x='4' y='1' width='10' height='14' rx='1' fill='none' stroke='#424242' stroke-width='1.4'/><rect x='7.5' y='5' width='10' height='13' fill='#EEEEF2' stroke='#424242' stroke-width='1.4'/><path d='M10 9 H15 M10 12 H15 M10 15 H15' stroke='#424242' stroke-width='1'/></svg>
<div class='a' style='left:1827px;top:123px;width:1px;height:24px;background:#CCCEDB'></div>
<svg class='a' style='left:1865px;top:123px;' width='8' height='6' viewBox='0 0 8 6'><path d='M0 0 L2.5 3 L0 6 Z M5 0 L7.5 3 L5 6 Z' fill='#717171'/></svg>
<div class='a' style='left:1535px;top:153px;width:341px;height:27px;background:#fff;border-top:1px solid #CCCEDB;border-bottom:1px solid #CCCEDB'></div>
<div class='t' style='left:1541px;top:161px;font-size:14.5px;line-height:14.5px;color:#717171;'><span class='sx' style='transform:scaleX(0.745)'>ソリューション エクスプローラー の検索</span></div>
<div class='t' style='left:1754px;top:161px;font-size:14.5px;line-height:14.5px;color:#717171;'>(Ctrl+:)</div>
<svg class='a' style='left:1842px;top:159px;' width='15' height='15' viewBox='0 0 15 15'><circle cx='9.5' cy='5.5' r='4.3' fill='none' stroke='#424242' stroke-width='2'/><path d='M6.5 8.5 L1.5 13.5' stroke='#424242' stroke-width='2.6' stroke-linecap='round'/></svg>
<svg class='a' style='left:1864px;top:164px;' width='7' height='4' viewBox='0 0 7 4'><path d='M0 0 H7 L3.5 4 Z' fill='#717171'/></svg>
<div class='a' style='left:1535px;top:180px;width:341px;height:758px;background:#F5F5F5'></div>
<div class='a' style='left:1535px;top:665.5px;width:341px;height:23px;background:#CCCEDB'></div>
<svg class='a' style='left:1550.5px;top:186.5px;' width='19' height='18' viewBox='0 0 19 18'><path d='M4.5 6 V2 H18 V16.5 H13' fill='none' stroke='#424242' stroke-width='1.4'/><rect x='4' y='1' width='14.5' height='2.8' fill='#424242'/><path d='M1 11 L3 10 L5.5 12 L9.5 8.5 L11.5 9.5 V17 L9.5 18 L5.5 14.5 L3 16.5 L1 15.5 Z M9.5 11 L7.2 13.2 L9.5 15.4 Z M2.5 12 V14.5 L3.8 13.2 Z' fill='#865FC5' fill-rule='evenodd'/></svg>
<div class='a' style='left:1576px;top:188.2px;width:300px;height:18px;overflow:hidden;font-size:14.1px;line-height:14px;white-space:pre;-webkit-text-stroke:0.25px currentColor'><span class='a sx' style='left:0;top:0;transform:scaleX(0.74)'>ソリューション</span><span class='a' style='left:79px;top:0;font-size:14.7px'>'WebApplication1' (1/1</span><span class='a sx' style='left:235px;top:0;transform:scaleX(0.78)'>プロジェクト)</span></div>
<svg class='a' style='left:1547.5px;top:214px;' width='9' height='9' viewBox='0 0 9 9'><path d='M8.5 0 V8.5 H0 Z' fill='#1E1E1E'/></svg>
<svg class='a' style='left:1574.0px;top:209.5px;' width='19' height='18' viewBox='0 0 19 18'><rect x='3.5' y='1' width='15' height='15' fill='#F5F5F5' stroke='#424242' stroke-width='1.3'/><rect x='3.5' y='1' width='15' height='3' fill='#424242'/><circle cx='6.5' cy='10.5' r='5.5' fill='#F5F5F5' stroke='#1B6AC9' stroke-width='1.2'/><path d='M1 10.5 H12 M6.5 5 V16 M3 7.5 C5 9 8 9 10 7.5 M3 13.5 C5 12 8 12 10 13.5' fill='none' stroke='#1B6AC9' stroke-width='0.9'/></svg>
<div class='t' style='left:1599.5px;top:211.2px;font-size:15.2px;line-height:15.2px;color:#1E1E1E;-webkit-text-stroke:0.45px currentColor'>WebApplication1</div>
<svg class='a' style='left:1596.0px;top:232.5px;' width='19' height='18' viewBox='0 0 19 18'><path d='M5 13 H3.5 C0.5 13 0.5 8 3.5 8 C3.5 3 10 2 11.5 5.5 C15 5 17 8 15.5 10.5 C15 12.5 14 13 12.5 13 H11' fill='none' stroke='#424242' stroke-width='1.3'/><path d='M6 8 V10 M10 8 V10' stroke='#424242' stroke-width='1.3'/><path d='M5 10 H11 L10 13 H6 Z' fill='#424242'/><rect x='7.3' y='13' width='1.5' height='4' fill='#424242'/></svg>
<div class='t' style='left:1621.5px;top:234.2px;font-size:14.1px;line-height:14.1px;color:#1E1E1E;'>Connected Services</div>
<svg class='a' style='left:1596.0px;top:255.5px;' width='19' height='18' viewBox='0 0 19 18'><path d='M1.5 16 L9 8.5' stroke='#424242' stroke-width='3.4' stroke-linecap='round'/><path d='M8 9 C6 5 9 0.5 14 1.5 L10.5 5 L12.5 7 L16 3.5 C17 8 12 11 9 9' fill='#424242'/></svg>
<div class='t' style='left:1621.5px;top:257.2px;font-size:14.1px;line-height:14.1px;color:#1E1E1E;'>My Project</div>
<svg class='a' style='left:1571.0px;top:281px;' width='7' height='12' viewBox='0 0 7 12'><path d='M0.75 0.75 L6 6 L0.75 11.25 Z' fill='none' stroke='#1E1E1E' stroke-width='1.5'/></svg>
<svg class='a' style='left:1596.0px;top:278.5px;' width='19' height='18' viewBox='0 0 19 18'><rect x='0.5' y='5' width='5' height='5' fill='#424242'/><rect x='9.5' y='3' width='7' height='9' fill='#424242'/><path d='M5.5 7.5 H9.5' stroke='#424242' stroke-width='1'/></svg>
<div class='t' style='left:1621.5px;top:280.2px;font-size:14.1px;line-height:14.1px;color:#1E1E1E;'>参照</div>
<svg class='a' style='left:1596.0px;top:301.5px;' width='19' height='18' viewBox='0 0 19 18'><path d='M0.5 3 H6 L7.5 1 H15.5 V14 H0.5 Z' fill='#DCB67A'/><path d='M7 2.2 H15 V3.6 H6.4 Z' fill='#F6EBD5'/></svg>
<div class='t' style='left:1621.5px;top:303.2px;font-size:14.1px;line-height:14.1px;color:#1E1E1E;'>App_Data</div>
<svg class='a' style='left:1571.0px;top:327px;' width='7' height='12' viewBox='0 0 7 12'><path d='M0.75 0.75 L6 6 L0.75 11.25 Z' fill='none' stroke='#1E1E1E' stroke-width='1.5'/></svg>
<svg class='a' style='left:1596.0px;top:324.5px;' width='19' height='18' viewBox='0 0 19 18'><path d='M0.5 3 H6 L7.5 1 H15.5 V14 H0.5 Z' fill='#DCB67A'/><path d='M7 2.2 H15 V3.6 H6.4 Z' fill='#F6EBD5'/></svg>
<div class='t' style='left:1621.5px;top:326.2px;font-size:14.1px;line-height:14.1px;color:#1E1E1E;'>App_Start</div>
<svg class='a' style='left:1571.0px;top:350px;' width='7' height='12' viewBox='0 0 7 12'><path d='M0.75 0.75 L6 6 L0.75 11.25 Z' fill='none' stroke='#1E1E1E' stroke-width='1.5'/></svg>
<svg class='a' style='left:1596.0px;top:347.5px;' width='19' height='18' viewBox='0 0 19 18'><path d='M0.5 3 H6 L7.5 1 H15.5 V14 H0.5 Z' fill='#DCB67A'/><path d='M7 2.2 H15 V3.6 H6.4 Z' fill='#F6EBD5'/></svg>
<div class='t' style='left:1621.5px;top:349.2px;font-size:14.1px;line-height:14.1px;color:#1E1E1E;'>Areas</div>
<svg class='a' style='left:1571.0px;top:373px;' width='7' height='12' viewBox='0 0 7 12'><path d='M0.75 0.75 L6 6 L0.75 11.25 Z' fill='none' stroke='#1E1E1E' stroke-width='1.5'/></svg>
<svg class='a' style='left:1596.0px;top:370.5px;' width='19' height='18' viewBox='0 0 19 18'><path d='M0.5 3 H6 L7.5 1 H15.5 V14 H0.5 Z' fill='#DCB67A'/><path d='M7 2.2 H15 V3.6 H6.4 Z' fill='#F6EBD5'/></svg>
<div class='t' style='left:1621.5px;top:372.2px;font-size:14.1px;line-height:14.1px;color:#1E1E1E;'>Authorize</div>
<svg class='a' style='left:1571.0px;top:396px;' width='7' height='12' viewBox='0 0 7 12'><path d='M0.75 0.75 L6 6 L0.75 11.25 Z' fill='none' stroke='#1E1E1E' stroke-width='1.5'/></svg>
<svg class='a' style='left:1596.0px;top:393.5px;' width='19' height='18' viewBox='0 0 19 18'><path d='M0.5 3 H6 L7.5 1 H15.5 V14 H0.5 Z' fill='#DCB67A'/><path d='M7 2.2 H15 V3.6 H6.4 Z' fill='#F6EBD5'/></svg>
<div class='t' style='left:1621.5px;top:395.2px;font-size:14.1px;line-height:14.1px;color:#1E1E1E;'>Content</div>
<svg class='a' style='left:1571.0px;top:419px;' width='7' height='12' viewBox='0 0 7 12'><path d='M0.75 0.75 L6 6 L0.75 11.25 Z' fill='none' stroke='#1E1E1E' stroke-width='1.5'/></svg>
<svg class='a' style='left:1596.0px;top:416.5px;' width='19' height='18' viewBox='0 0 19 18'><path d='M0.5 3 H6 L7.5 1 H15.5 V14 H0.5 Z' fill='#DCB67A'/><path d='M7 2.2 H15 V3.6 H6.4 Z' fill='#F6EBD5'/></svg>
<div class='t' style='left:1621.5px;top:418.2px;font-size:14.1px;line-height:14.1px;color:#1E1E1E;'>Controllers</div>
<svg class='a' style='left:1571.0px;top:442px;' width='7' height='12' viewBox='0 0 7 12'><path d='M0.75 0.75 L6 6 L0.75 11.25 Z' fill='none' stroke='#1E1E1E' stroke-width='1.5'/></svg>
<svg class='a' style='left:1596.0px;top:439.5px;' width='19' height='18' viewBox='0 0 19 18'><path d='M0.5 3 H6 L7.5 1 H15.5 V14 H0.5 Z' fill='#DCB67A'/><path d='M7 2.2 H15 V3.6 H6.4 Z' fill='#F6EBD5'/></svg>
<div class='t' style='left:1621.5px;top:441.2px;font-size:14.1px;line-height:14.1px;color:#1E1E1E;'>fonts</div>
<svg class='a' style='left:1569.5px;top:467px;' width='9' height='9' viewBox='0 0 9 9'><path d='M8.5 0 V8.5 H0 Z' fill='#1E1E1E'/></svg>
<svg class='a' style='left:1596.0px;top:462.5px;' width='19' height='18' viewBox='0 0 19 18'><path d='M0.5 3 H6 L7.5 1 H15.5 V14 H0.5 Z' fill='#DCB67A'/><path d='M3 5 H15.5 V14 H5 Z' fill='#F3F3F3' stroke='#DCB67A' stroke-width='0.8'/><path d='M0.5 8 H12 L15.5 14 H3 Z' fill='#DCB67A'/></svg>
<div class='t' style='left:1621.5px;top:464.2px;font-size:14.1px;line-height:14.1px;color:#1E1E1E;'>Models</div>
<svg class='a' style='left:1593.5px;top:488px;' width='7' height='12' viewBox='0 0 7 12'><path d='M0.75 0.75 L6 6 L0.75 11.25 Z' fill='none' stroke='#1E1E1E' stroke-width='1.5'/></svg>
<svg class='a' style='left:1618.5px;top:485.5px;' width='19' height='18' viewBox='0 0 19 18'><text x='0.5' y='12' font-family='Liberation Sans' font-weight='bold' font-size='12.5' fill='#00539C' letter-spacing='-1.4'>VB</text></svg>
<div class='t' style='left:1644px;top:487.2px;font-size:14.1px;line-height:14.1px;color:#1E1E1E;'>Record.vb</div>
<svg class='a' style='left:1593.5px;top:511px;' width='7' height='12' viewBox='0 0 7 12'><path d='M0.75 0.75 L6 6 L0.75 11.25 Z' fill='none' stroke='#1E1E1E' stroke-width='1.5'/></svg>
<svg class='a' style='left:1618.5px;top:508.5px;' width='19' height='18' viewBox='0 0 19 18'><text x='0.5' y='12' font-family='Liberation Sans' font-weight='bold' font-size='12.5' fill='#00539C' letter-spacing='-1.4'>VB</text></svg>
<div class='t' style='left:1644px;top:510.2px;font-size:14.1px;line-height:14.1px;color:#1E1E1E;'>ViewTestParam.vb</div>
<svg class='a' style='left:1596.0px;top:531.5px;' width='19' height='18' viewBox='0 0 19 18'><path d='M0.5 3 H6 L7.5 1 H15.5 V14 H0.5 Z' fill='#DCB67A'/><path d='M7 2.2 H15 V3.6 H6.4 Z' fill='#F6EBD5'/></svg>
<div class='t' style='left:1621.5px;top:533.2px;font-size:14.1px;line-height:14.1px;color:#1E1E1E;'>Properties</div>
<svg class='a' style='left:1571.0px;top:557px;' width='7' height='12' viewBox='0 0 7 12'><path d='M0.75 0.75 L6 6 L0.75 11.25 Z' fill='none' stroke='#1E1E1E' stroke-width='1.5'/></svg>
<svg class='a' style='left:1596.0px;top:554.5px;' width='19' height='18' viewBox='0 0 19 18'><path d='M0.5 3 H6 L7.5 1 H15.5 V14 H0.5 Z' fill='#DCB67A'/><path d='M7 2.2 H15 V3.6 H6.4 Z' fill='#F6EBD5'/></svg>
<div class='t' style='left:1621.5px;top:556.2px;font-size:14.1px;line-height:14.1px;color:#1E1E1E;'>Scripts</div>
<svg class='a' style='left:1569.5px;top:582px;' width='9' height='9' viewBox='0 0 9 9'><path d='M8.5 0 V8.5 H0 Z' fill='#1E1E1E'/></svg>
<svg class='a' style='left:1596.0px;top:577.5px;' width='19' height='18' viewBox='0 0 19 18'><path d='M0.5 3 H6 L7.5 1 H15.5 V14 H0.5 Z' fill='#DCB67A'/><path d='M3 5 H15.5 V14 H5 Z' fill='#F3F3F3' stroke='#DCB67A' stroke-width='0.8'/><path d='M0.5 8 H12 L15.5 14 H3 Z' fill='#DCB67A'/></svg>
<div class='t' style='left:1621.5px;top:579.2px;font-size:14.1px;line-height:14.1px;color:#1E1E1E;'>Views</div>
<svg class='a' style='left:1593.5px;top:603px;' width='7' height='12' viewBox='0 0 7 12'><path d='M0.75 0.75 L6 6 L0.75 11.25 Z' fill='none' stroke='#1E1E1E' stroke-width='1.5'/></svg>
<svg class='a' style='left:1618.5px;top:600.5px;' width='19' height='18' viewBox='0 0 19 18'><path d='M0.5 3 H6 L7.5 1 H15.5 V14 H0.5 Z' fill='#DCB67A'/><path d='M7 2.2 H15 V3.6 H6.4 Z' fill='#F6EBD5'/></svg>
<div class='t' style='left:1644px;top:602.2px;font-size:14.1px;line-height:14.1px;color:#1E1E1E;'>Home</div>
<svg class='a' style='left:1593.5px;top:626px;' width='7' height='12' viewBox='0 0 7 12'><path d='M0.75 0.75 L6 6 L0.75 11.25 Z' fill='none' stroke='#1E1E1E' stroke-width='1.5'/></svg>
<svg class='a' style='left:1618.5px;top:623.5px;' width='19' height='18' viewBox='0 0 19 18'><path d='M0.5 3 H6 L7.5 1 H15.5 V14 H0.5 Z' fill='#DCB67A'/><path d='M7 2.2 H15 V3.6 H6.4 Z' fill='#F6EBD5'/></svg>
<div class='t' style='left:1644px;top:625.2px;font-size:14.1px;line-height:14.1px;color:#1E1E1E;'>Shared</div>
<svg class='a' style='left:1592px;top:651px;' width='9' height='9' viewBox='0 0 9 9'><path d='M8.5 0 V8.5 H0 Z' fill='#1E1E1E'/></svg>
<svg class='a' style='left:1618.5px;top:646.5px;' width='19' height='18' viewBox='0 0 19 18'><path d='M0.5 3 H6 L7.5 1 H15.5 V14 H0.5 Z' fill='#DCB67A'/><path d='M3 5 H15.5 V14 H5 Z' fill='#F3F3F3' stroke='#DCB67A' stroke-width='0.8'/><path d='M0.5 8 H12 L15.5 14 H3 Z' fill='#DCB67A'/></svg>
<div class='t' style='left:1644px;top:648.2px;font-size:14.1px;line-height:14.1px;color:#1E1E1E;'>ViewTest</div>
<svg class='a' style='left:1641.0px;top:669.5px;' width='19' height='18' viewBox='0 0 19 18'><path d='M3.5 2.5 H1 V13.5 H3.5 M15 2.5 H17.5 V13.5 H15' fill='none' stroke='#555' stroke-width='1.8'/><text x='9' y='11.5' font-family='Liberation Sans' font-size='12' text-anchor='middle' fill='#424242'>@</text></svg>
<div class='t' style='left:1666.5px;top:671.2px;font-size:14.1px;line-height:14.1px;color:#1E1E1E;'>index.vbhtml</div>
<svg class='a' style='left:1618.5px;top:692.5px;' width='19' height='18' viewBox='0 0 19 18'><path d='M3.5 2.5 H1 V13.5 H3.5 M15 2.5 H17.5 V13.5 H15' fill='none' stroke='#555' stroke-width='1.8'/><text x='9' y='11.5' font-family='Liberation Sans' font-size='12' text-anchor='middle' fill='#424242'>@</text></svg>
<div class='t' style='left:1644px;top:694.2px;font-size:14.1px;line-height:14.1px;color:#1E1E1E;'>_ViewStart.vbhtml</div>
<svg class='a' style='left:1618.5px;top:715.5px;' width='19' height='18' viewBox='0 0 19 18'><path d='M4 1 H11.5 L16 5.5 V16.5 H5' fill='#F0F0F0' stroke='#424242' stroke-width='1.5'/><path d='M4 1 V5' stroke='#424242' stroke-width='1.5'/><path d='M11 1 V6 H16' fill='none' stroke='#424242' stroke-width='1.1'/><circle cx='4' cy='9.5' r='3.6' fill='#424242'/><rect x='2.7' y='10' width='2.6' height='7.5' fill='#424242'/><rect x='3' y='5.5' width='2' height='3.5' fill='#F5F5F5'/></svg>
<div class='t' style='left:1644px;top:717.2px;font-size:14.1px;line-height:14.1px;color:#1E1E1E;'>Web.config</div>
<svg class='a' style='left:1596.0px;top:738.5px;' width='19' height='18' viewBox='0 0 19 18'><path d='M3 1 H10 L14 5 V16.5 H3 Z' fill='#F0F0F0' stroke='#424242' stroke-width='1.5'/><path d='M9.5 1 V5.5 H14' fill='none' stroke='#424242' stroke-width='1.1'/><path d='M7.5 8.5 L8.3 10.6 L10.5 10.6 L8.8 11.9 L9.5 14 L7.5 12.7 L5.5 14 L6.2 11.9 L4.5 10.6 L6.7 10.6 Z' fill='#424242'/><circle cx='11' cy='9' r='0.8' fill='#424242'/><circle cx='5' cy='7' r='0.7' fill='#424242'/></svg>
<div class='t' style='left:1621.5px;top:740.2px;font-size:14.1px;line-height:14.1px;color:#1E1E1E;'>favicon.ico</div>
<svg class='a' style='left:1596.0px;top:761.5px;' width='19' height='18' viewBox='0 0 19 18'><path d='M7 1 H13 L17 5 V16.5 H10' fill='#F0F0F0' stroke='#424242' stroke-width='1.4'/><path d='M7 1 V8' stroke='#424242' stroke-width='1.4'/><path d='M12.5 1 V5.5 H17' fill='none' stroke='#424242' stroke-width='1.1'/><circle cx='5.5' cy='12.5' r='3' fill='none' stroke='#424242' stroke-width='1.8' stroke-dasharray='1.4 0.95'/><circle cx='5.5' cy='12.5' r='1.9' fill='#F5F5F5' stroke='#424242' stroke-width='1'/></svg>
<div class='t' style='left:1621.5px;top:763.2px;font-size:14.1px;line-height:14.1px;color:#1E1E1E;'>Global.asax</div>
<svg class='a' style='left:1596.0px;top:784.5px;' width='19' height='18' viewBox='0 0 19 18'><path d='M4 1 H11.5 L16 5.5 V16.5 H5' fill='#F0F0F0' stroke='#424242' stroke-width='1.5'/><path d='M4 1 V5' stroke='#424242' stroke-width='1.5'/><path d='M11 1 V6 H16' fill='none' stroke='#424242' stroke-width='1.1'/><circle cx='4' cy='9.5' r='3.6' fill='#424242'/><rect x='2.7' y='10' width='2.6' height='7.5' fill='#424242'/><rect x='3' y='5.5' width='2' height='3.5' fill='#F5F5F5'/></svg>
<div class='t' style='left:1621.5px;top:786.2px;font-size:14.1px;line-height:14.1px;color:#1E1E1E;'>packages.config</div>
<svg class='a' style='left:1596.0px;top:807.5px;' width='19' height='18' viewBox='0 0 19 18'><path d='M4 1 H11.5 L16 5.5 V16.5 H5' fill='#F0F0F0' stroke='#424242' stroke-width='1.5'/><path d='M4 1 V5' stroke='#424242' stroke-width='1.5'/><path d='M11 1 V6 H16' fill='none' stroke='#424242' stroke-width='1.1'/><circle cx='4' cy='9.5' r='3.6' fill='#424242'/><rect x='2.7' y='10' width='2.6' height='7.5' fill='#424242'/><rect x='3' y='5.5' width='2' height='3.5' fill='#F5F5F5'/></svg>
<div class='t' style='left:1621.5px;top:809.2px;font-size:14.1px;line-height:14.1px;color:#1E1E1E;'>Web.config</div>
<div class='a' style='left:1541px;top:643px;width:314px;height:51px;border:5px solid #ED1C24'></div>
<svg class='a' style='left:1543px;top:921px;' width='6' height='11' viewBox='0 0 6 11'><path d='M6 0 V11 L0 5.5 Z' fill='#868999'/></svg>
<div class='a' style='left:1556px;top:922px;width:296px;height:10px;background:#C2C3C9'></div>
<svg class='a' style='left:1863px;top:921px;' width='6' height='11' viewBox='0 0 6 11'><path d='M0 0 V11 L6 5.5 Z' fill='#868999'/></svg>
<div class='a' style='left:1534px;top:938px;width:177px;height:25px;background:#F5F5F5;border:1px solid #CCCEDB;border-top:none'></div>
<div class='a' style='left:1710px;top:938px;width:167px;height:1px;background:#CCCEDB'></div>
<div class='t' style='left:1540.5px;top:944px;font-size:14.5px;line-height:14.5px;color:#0E70C0;'><span class='sx' style='transform:scaleX(0.7)'>ソリューション エクスプローラー</span></div>
<div class='t' style='left:1718.5px;top:944px;font-size:14.5px;line-height:14.5px;color:#1E1E1E;'><span class='sx' style='transform:scaleX(0.7)'>チーム エクスプローラー</span></div>
</body></html>
